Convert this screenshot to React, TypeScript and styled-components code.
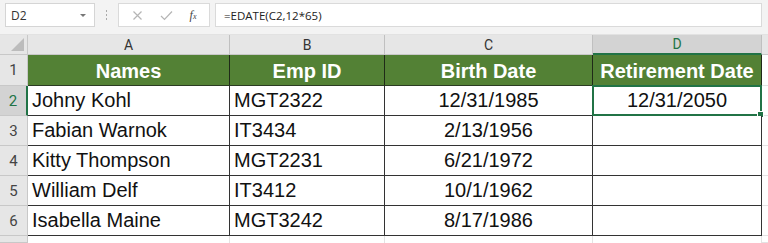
import React from 'react';
import styled, { createGlobalStyle } from 'styled-components';

const Global = createGlobalStyle`
  html, body { margin: 0; padding: 0; background: #fff; }
  body { font-family: "Liberation Sans", Arial, sans-serif; }
`;

const Page = styled.div`
  width: 768px;
  height: 243px;
  overflow: hidden;
  background: #fff;
  display: flex;
  flex-direction: column;
`;

const Toolbar = styled.div`
  height: 35px;
  background: #f3f3f3;
  display: flex;
  align-items: flex-start;
  padding: 3px 6px 0 5px;
  box-sizing: border-box;
  gap: 0;
  border-bottom: 1px solid #e2e2e2;
`;

const NameBox = styled.div`
  width: 90px;
  height: 24px;
  box-sizing: border-box;
  background: #fff;
  border: 1px solid #d5d5d5;
  display: flex;
  align-items: center;
  justify-content: space-between;
  padding: 0 8px 0 5px;
  font-family: "Open Sans", "Liberation Sans", sans-serif;
  font-size: 12px;
  color: #333;
`;

const Caret = styled.span`
  width: 0;
  height: 0;
  border-left: 3px solid transparent;
  border-right: 3px solid transparent;
  border-top: 3px solid #777;
`;

const Dots = styled.div`
  width: 23px;
  height: 24px;
  display: flex;
  flex-direction: column;
  align-items: center;
  justify-content: center;
  gap: 2px;
  & > i { width: 1px; height: 2px; background: #aaa; display: block; }
`;

const ButtonBox = styled.div`
  width: 92px;
  height: 24px;
  box-sizing: border-box;
  background: #fff;
  border: 1px solid #dadada;
  display: flex;
  align-items: center;
  justify-content: space-around;
  padding: 0 4px;
  margin-right: 5px;
`;

const Fx = styled.span`
  font-family: "Liberation Serif", serif;
  font-style: italic;
  font-size: 12px;
  color: #444;
  & > sub { font-size: 8px; vertical-align: baseline; }
`;

const FormulaInput = styled.div`
  flex: 1;
  height: 24px;
  box-sizing: border-box;
  background: #fff;
  border: 1px solid #dadada;
  display: flex;
  align-items: center;
  padding: 0 8px;
  font-family: "Open Sans", "Liberation Sans", sans-serif;
  font-size: 11.5px;
  color: #222;
`;

const Sheet = styled.div`
  flex: 1;
  display: grid;
  grid-template-columns: 28px 202px 155px 208px 169px 1fr;
  grid-template-rows: 20px 31px repeat(5, 30px) 1fr;
`;

const Corner = styled.div`
  background: #e6e6e6;
  border-right: 1px solid #c8c8c8;
  border-bottom: 1px solid #c8c8c8;
  position: relative;
  overflow: hidden;
  &::after {
    content: '';
    position: absolute;
    right: 3px;
    bottom: 3px;
    width: 0;
    height: 0;
    border-left: 13px solid transparent;
    border-bottom: 13px solid #bcbcbc;
  }
`;

const ColHead = styled.div<{ $active?: boolean }>`
  background: ${p => (p.$active ? '#d3d3d3' : '#e6e6e6')};
  color: ${p => (p.$active ? '#217346' : '#333')};
  border-right: 1px solid #c0c0c0;
  border-bottom: ${p => (p.$active ? '2px solid #217346' : '1px solid #c8c8c8')};
  box-sizing: border-box;
  display: flex;
  align-items: center;
  justify-content: center;
  font-family: "Roboto", "Liberation Sans", sans-serif;
  font-size: 14px;
`;

const Filler = styled.div<{ $head?: boolean }>`
  background: ${p => (p.$head ? '#e6e6e6' : '#fff')};
  border-bottom: ${p => (p.$head ? '1px solid #c8c8c8' : '1px solid #e3e3e3')};
`;

const RowHead = styled.div<{ $active?: boolean }>`
  background: ${p => (p.$active ? '#d3d3d3' : '#e6e6e6')};
  color: ${p => (p.$active ? '#217346' : '#444')};
  border-bottom: 1px solid #c8c8c8;
  border-right: ${p => (p.$active ? '2px solid #217346' : '1px solid #c8c8c8')};
  box-sizing: border-box;
  display: flex;
  align-items: center;
  justify-content: center;
  font-family: "Roboto", "Liberation Sans", sans-serif;
  font-size: 15px;
`;

const HeadCell = styled.div`
  background: #538135;
  color: #fff;
  font-weight: bold;
  font-size: 20px;
  display: flex;
  align-items: center;
  justify-content: center;
  border-right: 1px solid #1f2a18;
  border-bottom: 1px solid #2b3b22;
  box-sizing: border-box;
  padding-top: 2px;
`;

const Cell = styled.div<{ $align?: 'left' | 'center' }>`
  position: relative;
  background: #fff;
  color: #111;
  font-size: 20px;
  display: flex;
  align-items: center;
  justify-content: ${p => (p.$align === 'center' ? 'center' : 'flex-start')};
  padding: 0 4px;
  border-right: 1px solid #333;
  border-bottom: 1px solid #333;
  box-sizing: border-box;
  white-space: nowrap;
`;

const Selection = styled.div`
  position: absolute;
  inset: -1px -1px -1px -1px;
  border: 2px solid #217346;
  pointer-events: none;
  &::after {
    content: '';
    position: absolute;
    right: -4px;
    bottom: -4px;
    width: 5px;
    height: 5px;
    background: #217346;
    border: 1px solid #fff;
  }
`;

const BlankCell = styled.div`
  background: #fff;
  border-right: 1px solid #e3e3e3;
`;

const people = [
  { name: 'Johny Kohl', id: 'MGT2322', birth: '12/31/1985', retire: '12/31/2050' },
  { name: 'Fabian Warnok', id: 'IT3434', birth: '2/13/1956', retire: '' },
  { name: 'Kitty Thompson', id: 'MGT2231', birth: '6/21/1972', retire: '' },
  { name: 'William Delf', id: 'IT3412', birth: '10/1/1962', retire: '' },
  { name: 'Isabella Maine', id: 'MGT3242', birth: '8/17/1986', retire: '' },
];

const XIcon = () => (
  <svg width="11" height="11" viewBox="0 0 11 11">
    <path d="M1.5 1.5 L9.5 9.5 M9.5 1.5 L1.5 9.5" stroke="#b5b5b5" strokeWidth="1.2" />
  </svg>
);

const CheckIcon = () => (
  <svg width="13" height="11" viewBox="0 0 13 11">
    <path d="M1 6 L4.5 9.5 L12 1.5" stroke="#b5b5b5" strokeWidth="1.2" fill="none" />
  </svg>
);

const App: React.FC = () => {
  return (
    <Page>
      <Global />
      <Toolbar>
        <NameBox>
          D2
          <Caret />
        </NameBox>
        <Dots>
          <i />
          <i />
          <i />
        </Dots>
        <ButtonBox>
          <XIcon />
          <CheckIcon />
          <Fx>
            f<sub>x</sub>
          </Fx>
        </ButtonBox>
        <FormulaInput>=EDATE(C2,12*65)</FormulaInput>
      </Toolbar>
      <Sheet>
        <Corner />
        <ColHead>A</ColHead>
        <ColHead>B</ColHead>
        <ColHead>C</ColHead>
        <ColHead $active>D</ColHead>
        <Filler $head />

        <RowHead>1</RowHead>
        <HeadCell>Names</HeadCell>
        <HeadCell>Emp ID</HeadCell>
        <HeadCell>Birth Date</HeadCell>
        <HeadCell>Retirement Date</HeadCell>
        <Filler />

        {people.map((p, i) => (
          <React.Fragment key={p.id}>
            <RowHead $active={i === 0}>{i + 2}</RowHead>
            <Cell>{p.name}</Cell>
            <Cell>{p.id}</Cell>
            <Cell $align="center">{p.birth}</Cell>
            <Cell $align="center">
              {p.retire}
              {i === 0 && <Selection />}
            </Cell>
            <Filler />
          </React.Fragment>
        ))}

        <RowHead />
        <BlankCell />
        <BlankCell />
        <BlankCell />
        <BlankCell />
        <Filler />
      </Sheet>
    </Page>
  );
};

export default App;
